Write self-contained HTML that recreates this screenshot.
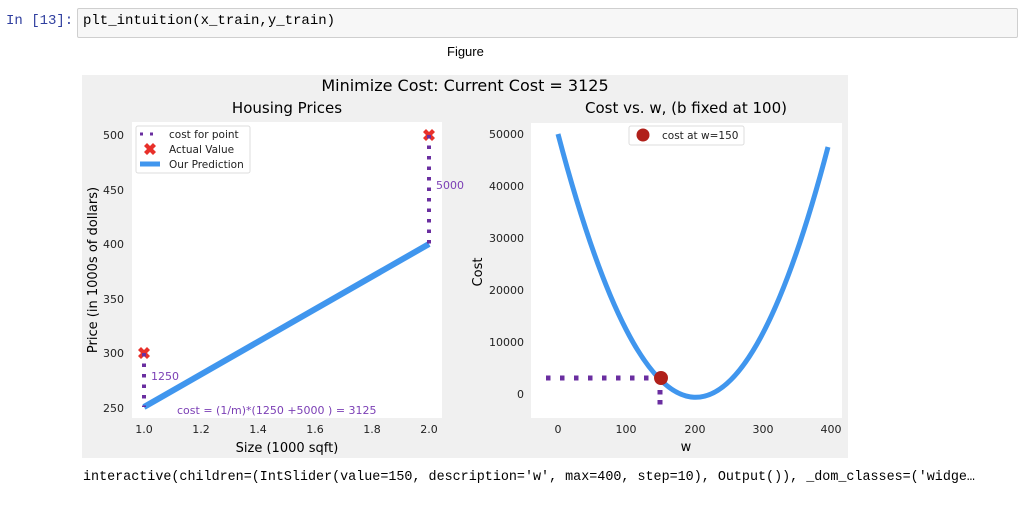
<!DOCTYPE html>
<html><head><style>
body{margin:0;width:1024px;height:510px;background:#fff;position:relative;overflow:hidden;font-family:"Liberation Sans",sans-serif}
.p{position:absolute}
</style></head><body>
<div class="p" style="left:6px;top:13px;font:14px 'Liberation Mono',monospace;color:#303f9f">In [13]:</div>
<div class="p" style="left:77px;top:8px;width:939px;height:28px;border:1px solid #cfcfcf;background:#f7f7f7;border-radius:2px"></div>
<div class="p" style="left:83px;top:13px;font:14px 'Liberation Mono',monospace;color:#000">plt_intuition(x_train,y_train)</div>
<div class="p" style="left:447px;top:44px;font-size:13px">Figure</div>
<svg class="p" style="left:0;top:0" width="1024" height="510" font-family="DejaVu Sans, sans-serif">
<defs><path id="x" d="M-6,-3 L-3,-6 L0,-3 L3,-6 L6,-3 L3,0 L6,3 L3,6 L0,3 L-3,6 L-6,3 L-3,0 Z" fill="#e8302a"/></defs>
<rect x="82" y="75" width="766" height="383" fill="#f0f0f0"/>
<text x="465" y="91" font-size="16" text-anchor="middle">Minimize Cost: Current Cost = 3125</text>
<text x="287" y="113" font-size="15" text-anchor="middle">Housing Prices</text>
<text x="686" y="113" font-size="15" text-anchor="middle">Cost vs. w, (b fixed at 100)</text>
<rect x="132" y="122" width="310" height="296" fill="#fff"/>
<rect x="531" y="123" width="311" height="295" fill="#fff"/>
<g font-size="11" text-anchor="end" fill="#222">
<text x="124" y="139">500</text><text x="124" y="194">450</text><text x="124" y="248">400</text><text x="124" y="303">350</text><text x="124" y="357">300</text><text x="124" y="412">250</text>
</g>
<g font-size="11" text-anchor="middle" fill="#222">
<text x="144" y="433">1.0</text><text x="201" y="433">1.2</text><text x="258" y="433">1.4</text><text x="315" y="433">1.6</text><text x="372" y="433">1.8</text><text x="429" y="433">2.0</text>
</g>
<text x="287" y="452" font-size="13" text-anchor="middle">Size (1000 sqft)</text>
<text transform="translate(97,270) rotate(-90)" font-size="13" text-anchor="middle">Price (in 1000s of dollars)</text>
<line x1="144" y1="407" x2="429" y2="244" stroke="#4096ee" stroke-width="6"/>
<use href="#x" x="144" y="353"/>
<use href="#x" x="429" y="135"/>
<line x1="144" y1="353" x2="144" y2="407" stroke="#6a2ea0" stroke-width="4" stroke-dasharray="3.5 7"/>
<line x1="429" y1="135" x2="429" y2="244" stroke="#6a2ea0" stroke-width="4" stroke-dasharray="3.5 7"/>
<text x="151" y="380" font-size="11" fill="#7b3fb5">1250</text>
<text x="436" y="189" font-size="11" fill="#7b3fb5">5000</text>
<text x="177" y="414" font-size="11" fill="#7b3fb5">cost = (1/m)*(1250 +5000 ) = 3125</text>
<rect x="136" y="126" width="114" height="47" fill="#fff" stroke="#ddd" rx="2"/>
<line x1="140" y1="134" x2="160" y2="134" stroke="#6a2ea0" stroke-width="3" stroke-dasharray="3 7"/>
<use href="#x" x="150" y="149"/>
<line x1="140" y1="164" x2="160" y2="164" stroke="#4096ee" stroke-width="5"/>
<g font-size="10.5" fill="#222"><text x="169" y="138">cost for point</text><text x="169" y="153">Actual Value</text><text x="169" y="168">Our Prediction</text></g>
<g font-size="11" text-anchor="end" fill="#222">
<text x="524" y="138">50000</text><text x="524" y="190">40000</text><text x="524" y="242">30000</text><text x="524" y="294">20000</text><text x="524" y="346">10000</text><text x="524" y="398">0</text>
</g>
<g font-size="11" text-anchor="middle" fill="#222">
<text x="558" y="433">0</text><text x="626" y="433">100</text><text x="695" y="433">200</text><text x="763" y="433">300</text><text x="831" y="433">400</text>
</g>
<text x="686" y="451" font-size="13" text-anchor="middle">w</text>
<text transform="translate(482,272) rotate(-90)" font-size="13" text-anchor="middle">Cost</text>
<path d="M558,134 Q695,654 828,147" fill="none" stroke="#4096ee" stroke-width="5"/>
<line x1="546" y1="378" x2="654" y2="378" stroke="#6a2ea0" stroke-width="5" stroke-dasharray="4.5 9.5"/>
<line x1="660" y1="390" x2="660" y2="408" stroke="#6a2ea0" stroke-width="5" stroke-dasharray="4.5 5.5"/>
<circle cx="661" cy="378" r="7" fill="#b0201a"/>
<rect x="629" y="126" width="115" height="19" fill="#fff" stroke="#ddd" rx="2"/>
<circle cx="643" cy="135" r="6.5" fill="#b0201a"/>
<text x="662" y="139" font-size="10.5" fill="#222">cost at w=150</text>
</svg>
<div class="p" style="left:83px;top:470px;font:13.4px 'Liberation Mono',monospace;color:#000;white-space:nowrap">interactive(children=(IntSlider(value=150, description='w', max=400, step=10), Output()), _dom_classes=('widge…</div>
</body></html>
